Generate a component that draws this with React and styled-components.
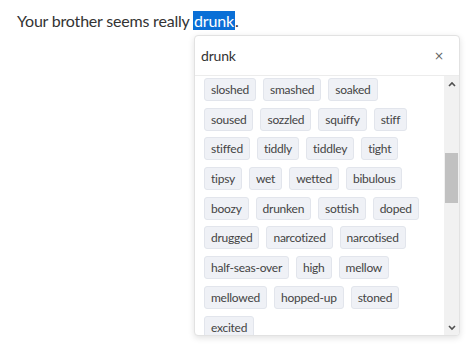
import React from "react";
import styled, { createGlobalStyle } from "styled-components";

const Global = createGlobalStyle`
  html, body { margin: 0; padding: 0; background: #fff; }
  body { font-family: "Source Sans Pro", Lato, "Noto Sans", sans-serif; color: #333; }
`;

const Page = styled.div`
  position: relative;
  width: 474px;
  height: 350px;
  overflow: hidden;
`;

const Sentence = styled.p`
  margin: 0;
  padding: 10px 0 0 17px;
  font-size: 16px;
  letter-spacing: -0.2px;
  line-height: 22px;
  color: #333;
`;

const Mark = styled.span`
  background: #0a6fd6;
  color: #fff;
  padding: 0 1px;
`;

const Popover = styled.div`
  position: absolute;
  left: 194px;
  top: 35px;
  width: 264px;
  height: 299px;
  background: #fff;
  border: 1px solid #e2e2e2;
  border-radius: 4px;
  box-shadow: 0 2px 6px rgba(0, 0, 0, 0.12);
  display: flex;
  flex-direction: column;
  overflow: hidden;
`;

const Header = styled.div`
  height: 39px;
  flex: none;
  display: flex;
  align-items: center;
  justify-content: space-between;
  padding: 0 15px 0 6px;
  border-bottom: 1px solid #ececec;
`;

const Title = styled.span`
  font-size: 14px;
  letter-spacing: -0.2px;
  color: #333;
`;

const Close = styled.span`
  font-size: 12px;
  color: #666;
  font-family: "DejaVu Sans", sans-serif;
`;

const Body = styled.div`
  flex: 1;
  display: flex;
  min-height: 0;
`;

const List = styled.div`
  flex: 1;
  padding: 2px 6px 0 9px;
  display: flex;
  flex-direction: column;
  gap: 6.7px;
  overflow: hidden;
`;

const Row = styled.div`
  display: flex;
  gap: 7px;
`;

const Chip = styled.span`
  flex: none;
  height: 21px;
  line-height: 21px;
  padding: 0 6px;
  background: #eff1f6;
  border: 1px solid #e2e5ec;
  border-radius: 3px;
  font-size: 12px;
  letter-spacing: -0.25px;
  color: #444;
`;

const Scrollbar = styled.div`
  width: 15px;
  flex: none;
  background: #f1f1f1;
  display: flex;
  flex-direction: column;
  align-items: stretch;
`;

const Arrow = styled.div`
  height: 15px;
  display: flex;
  align-items: center;
  justify-content: center;
`;

const Track = styled.div`
  flex: 1;
  padding-top: 62px;
`;

const Thumb = styled.div`
  height: 50px;
  margin: 0 1px;
  background: #c1c1c1;
`;

const rows = [
  ["sloshed", "smashed", "soaked"],
  ["soused", "sozzled", "squiffy", "stiff"],
  ["stiffed", "tiddly", "tiddley", "tight"],
  ["tipsy", "wet", "wetted", "bibulous"],
  ["boozy", "drunken", "sottish", "doped"],
  ["drugged", "narcotized", "narcotised"],
  ["half-seas-over", "high", "mellow"],
  ["mellowed", "hopped-up", "stoned"],
  ["excited"],
];

const Chevron = ({ up }) => (
  <svg width="8" height="6" viewBox="0 0 8 6">
    <path
      d={up ? "M1 5 L4 2 L7 5" : "M1 1 L4 4 L7 1"}
      fill="none"
      stroke="#505050"
      strokeWidth="1.6"
    />
  </svg>
);

export default function App() {
  return (
    <Page>
      <Global />
      <Sentence>
        Your brother seems really <Mark>drunk</Mark>.
      </Sentence>
      <Popover>
        <Header>
          <Title>drunk</Title>
          <Close>×</Close>
        </Header>
        <Body>
          <List>
            {rows.map((r, i) => (
              <Row key={i}>
                {r.map((w) => (
                  <Chip key={w}>{w}</Chip>
                ))}
              </Row>
            ))}
          </List>
          <Scrollbar>
            <Arrow>
              <Chevron up />
            </Arrow>
            <Track>
              <Thumb />
            </Track>
            <Arrow>
              <Chevron />
            </Arrow>
          </Scrollbar>
        </Body>
      </Popover>
    </Page>
  );
}
